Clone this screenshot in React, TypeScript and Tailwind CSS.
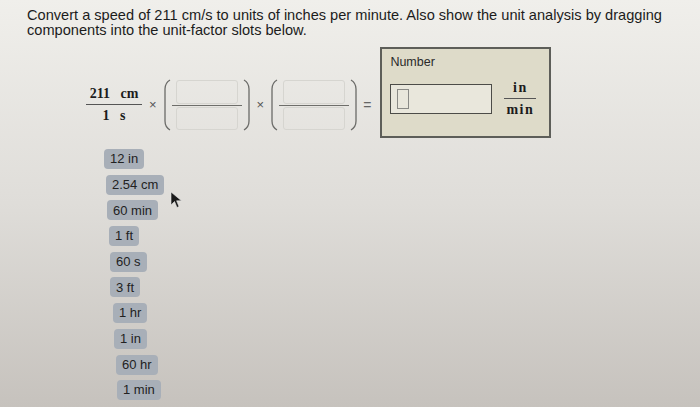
import React from "react";

const tiles = [
  { label: "12 in", ml: "ml-[104px]" },
  { label: "2.54 cm", ml: "ml-[106px]" },
  { label: "60 min", ml: "ml-[107px]" },
  { label: "1 ft", ml: "ml-[109px]" },
  { label: "60 s", ml: "ml-[110px]" },
  { label: "3 ft", ml: "ml-[110px]" },
  { label: "1 hr", ml: "ml-[113px]" },
  { label: "1 in", ml: "ml-[114px]" },
  { label: "60 hr", ml: "ml-[116px]" },
  { label: "1 min", ml: "ml-[117px]" },
];

const Paren = ({ side }: { side: "l" | "r" }) => (
  <svg width="8" height="52" viewBox="0 0 8 52" className="shrink-0">
    <path
      d={side === "l" ? "M6 1 Q1 4 1 10 L1 42 Q1 48 6 51" : "M2 1 Q7 4 7 10 L7 42 Q7 48 2 51"}
      fill="none"
      stroke="#6b6b68"
      strokeWidth="1.3"
    />
  </svg>
);

const Slot = () => (
  <div className="flex items-center">
    <Paren side="l" />
    <div className="flex flex-col w-[70px]">
      <div className="h-[24px] mx-[4px] border border-[#d6d5d0] rounded-[3px]" />
      <div className="h-[1px] bg-[#6e6e6a] my-[1px]" />
      <div className="h-[23px] mx-[4px] border border-[#d6d5d0] rounded-[3px]" />
    </div>
    <Paren side="r" />
  </div>
);

const Times = () => <span className="mx-[7px] text-[13px] text-[#555] font-['Liberation_Sans',sans-serif]">×</span>;

export default function App() {
  return (
    <div className="relative w-[700px] h-[407px] overflow-hidden bg-gradient-to-b from-[#f0efeb] via-[#dfddd9] to-[#c6c2bd] font-['Liberation_Sans',Arial,sans-serif] text-[#1c1c1c]">
      <p className="pl-[27px] pt-[8px] pr-[10px] text-[14.6px] leading-[15px]">
        Convert a speed of 211 cm/s to units of inches per minute. Also show the unit analysis by dragging
        <br />
        components into the unit-factor slots below.
      </p>

      <div className="flex items-start mt-[9px]">
        <div className="flex items-center ml-[86px] mt-[32px]">
          {/* given quantity */}
          <div className="flex flex-col items-center font-['Liberation_Serif',serif] font-bold text-[14px] leading-[14px]">
            <div className="pb-[3px] whitespace-pre">211   cm</div>
            <div className="h-[1px] w-[56px] bg-[#555]" />
            <div className="pt-[4px] whitespace-pre">1   s</div>
          </div>
          <Times />
          <Slot />
          <Times />
          <Slot />
          <span className="ml-[6px] text-[14px] text-[#666]">=</span>
        </div>

        {/* answer box */}
        <div className="ml-[9px] w-[171px] h-[91px] border-2 border-[#5d5e59] bg-[#dedbc9] px-[8px] pt-[6px]">
          <div className="text-[12.5px] leading-[14px] text-[#2a2a2a]">Number</div>
          <div className="flex items-center mt-[12px]">
            <div className="w-[102px] h-[30px] border border-[#4c4c48] bg-[#e9e7dc] flex items-center pl-[6px]">
              <div className="w-[12px] h-[20px] border border-[#8a8a86]" />
            </div>
            <div className="ml-[12px] flex flex-col items-center font-['Liberation_Serif',serif] font-bold text-[14px] leading-[14px] tracking-[1.5px]">
              <div className="pb-[3px]">in</div>
              <div className="h-[1px] w-[32px] bg-[#555]" />
              <div className="pt-[4px]">min</div>
            </div>
          </div>
        </div>
      </div>

      {/* draggable unit tiles */}
      <div className="flex flex-col items-start gap-[5.7px] mt-[11px]">
        {tiles.map((t) => (
          <div
            key={t.label}
            className={`${t.ml} h-[20px] px-[6px] flex items-center rounded-[4px] bg-[#a8afb8] text-[13px] text-[#222]`}
          >
            {t.label}
          </div>
        ))}
      </div>

      {/* mouse pointer */}
      <svg className="absolute left-[170px] top-[191px]" width="14" height="18" viewBox="0 0 14 18">
        <path d="M1 1 L1 14 L4.5 10.5 L7 16.5 L9 15.6 L6.6 9.8 L11.5 9.8 Z" fill="#1a1a1a" stroke="#e8e8e8" strokeWidth="0.6" />
      </svg>
    </div>
  );
}
